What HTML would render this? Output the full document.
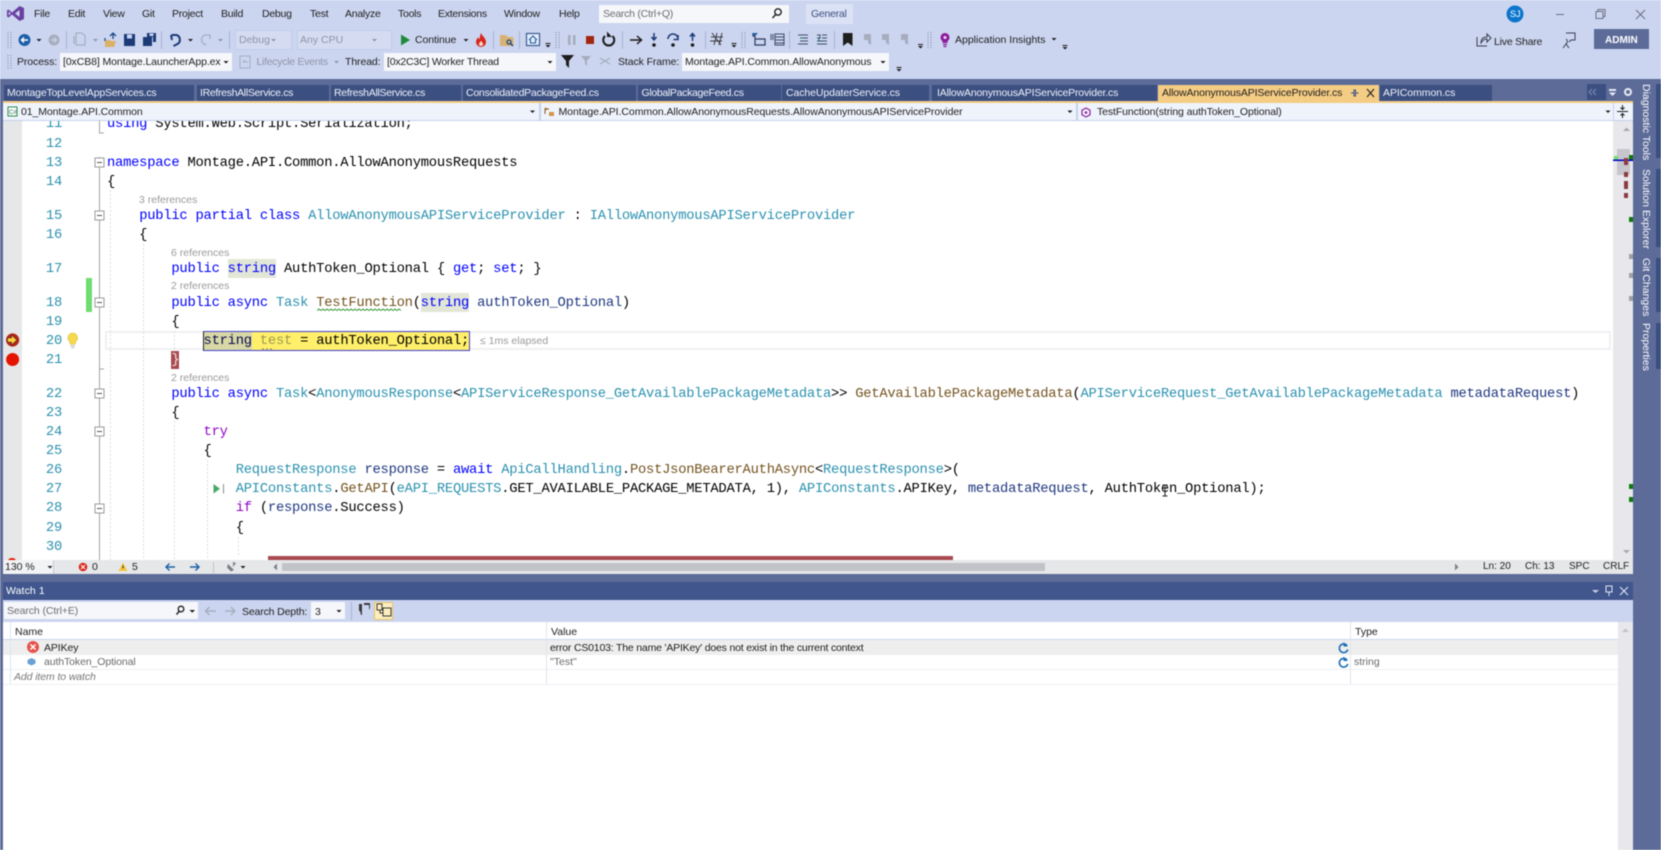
<!DOCTYPE html>
<html><head><meta charset="utf-8"><style>
html,body{margin:0;padding:0;width:1661px;height:850px;overflow:hidden;background:#fff}
#p{position:absolute;left:0;top:0;width:1661px;height:850px;overflow:hidden;background:#ccd5f0;font-family:"Liberation Sans",sans-serif;filter:blur(.45px)}
.b{position:absolute}
.t{position:absolute;white-space:pre;font-size:10.5px;line-height:14px;height:14px;color:#1e1e1e}
.m{letter-spacing:-.25px}
.tab{position:absolute;top:85px;height:16px;background:#3b4f81}
.tt{color:#f0f2fa;top:86px;letter-spacing:-.2px}
.c{position:absolute;left:107px;margin-top:1px;white-space:pre;font-family:"Liberation Mono",monospace;font-size:13.8px;letter-spacing:-.235px;line-height:19px;height:19px;color:#000}
.n{position:absolute;left:36px;margin-top:1px;width:26px;text-align:right;font-family:"Liberation Mono",monospace;font-size:13.8px;letter-spacing:-.235px;line-height:19px;color:#2b91af}
.k{color:#0000ff}.y{color:#2b91af}.f{color:#74531f}.x{color:#8f08c4}.v{color:#1f377f}
.l{position:absolute;white-space:pre;font-size:10.5px;line-height:14px;color:#9a9a9a}
.s{position:absolute;writing-mode:vertical-rl;white-space:pre;font-size:10.5px;line-height:12px;color:#fff;left:1640px}
.d{position:absolute;left:1656px;width:5px;background:#3b4f81}
</style></head><body><div id="p">

<!-- menu row -->
<div class="t m" style="left:34px;top:7px">File</div>
<div class="t m" style="left:68px;top:7px">Edit</div>
<div class="t m" style="left:103px;top:7px">View</div>
<div class="t m" style="left:142px;top:7px">Git</div>
<div class="t m" style="left:172px;top:7px">Project</div>
<div class="t m" style="left:221px;top:7px">Build</div>
<div class="t m" style="left:262px;top:7px">Debug</div>
<div class="t m" style="left:310px;top:7px">Test</div>
<div class="t m" style="left:345px;top:7px">Analyze</div>
<div class="t m" style="left:398px;top:7px">Tools</div>
<div class="t m" style="left:438px;top:7px">Extensions</div>
<div class="t m" style="left:504px;top:7px">Window</div>
<div class="t m" style="left:559px;top:7px">Help</div>
<div class="b" style="left:599px;top:5px;width:190px;height:18px;background:#f6f7fb"></div>
<div class="t m" style="left:603px;top:7px;color:#6d6d6d">Search (Ctrl+Q)</div>
<div class="b" style="left:806px;top:4px;width:47px;height:20px;background:#dce2f5"></div>
<div class="t m" style="left:811px;top:7px;color:#3b4f81">General</div>

<!-- toolbar row 2 -->
<div class="b" style="left:235px;top:30px;width:57px;height:20px;background:#d5dcf2;border:1px solid #c2cce8;box-sizing:border-box"></div>
<div class="t" style="left:239px;top:33px;color:#8e95a8">Debug</div>
<div class="b" style="left:297px;top:30px;width:95px;height:20px;background:#d5dcf2;border:1px solid #c2cce8;box-sizing:border-box"></div>
<div class="t" style="left:300px;top:33px;color:#8e95a8">Any CPU</div>
<div class="t" style="left:415px;top:33px;letter-spacing:-.1px">Continue</div>
<div class="t" style="left:955px;top:33px">Application Insights</div>
<div class="t" style="left:1494px;top:35px;letter-spacing:-.2px">Live Share</div>
<div class="b" style="left:1594px;top:29px;width:55px;height:20px;background:#5d6b99"></div>
<div class="t" style="left:1605px;top:34px;color:#fff;font-weight:bold;font-size:10px">ADMIN</div>

<!-- toolbar row 3 -->
<div class="t" style="left:17px;top:55px;letter-spacing:-.1px">Process:</div>
<div class="b" style="left:60px;top:53px;width:172px;height:18px;background:#f6f7fb"></div>
<div class="t" style="left:63px;top:55px;letter-spacing:-.1px">[0xCB8] Montage.LauncherApp.ex</div>
<div class="t" style="left:256.500px;top:55px;color:#8e95a8;letter-spacing:-.28px">Lifecycle Events</div>
<div class="t" style="left:345px;top:55px;letter-spacing:-.1px">Thread:</div>
<div class="b" style="left:384px;top:53px;width:172px;height:18px;background:#f6f7fb"></div>
<div class="t" style="left:387px;top:55px;letter-spacing:-.2px">[0x2C3C] Worker Thread</div>
<div class="t" style="left:618px;top:55px;letter-spacing:-.1px">Stack Frame:</div>
<div class="b" style="left:682px;top:53px;width:207px;height:18px;background:#f6f7fb"></div>
<div class="t" style="left:685px;top:55px;letter-spacing:-.1px">Montage.API.Common.AllowAnonymous</div>

<!-- tab strip -->
<div class="b" style="left:0;top:79px;width:1661px;height:23px;background:#5d6b99"></div>
<div class="tab" style="left:4px;width:190px"></div><div class="t tt" style="left:7px">MontageTopLevelAppServices.cs</div>
<div class="tab" style="left:197px;width:132px"></div><div class="t tt" style="left:200px;letter-spacing:-.32px">IRefreshAllService.cs</div>
<div class="tab" style="left:331px;width:130px"></div><div class="t tt" style="left:334px;letter-spacing:-.29px">RefreshAllService.cs</div>
<div class="tab" style="left:463px;width:173px"></div><div class="t tt" style="left:466px;letter-spacing:-.26px">ConsolidatedPackageFeed.cs</div>
<div class="tab" style="left:638px;width:143px"></div><div class="t tt" style="left:641.500px;letter-spacing:-.32px">GlobalPackageFeed.cs</div>
<div class="tab" style="left:782px;width:147px"></div><div class="t tt" style="left:786px;letter-spacing:-.1px">CacheUpdaterService.cs</div>
<div class="tab" style="left:932px;width:225px"></div><div class="t tt" style="left:937px;letter-spacing:-.17px">IAllowAnonymousAPIServiceProvider.cs</div>
<div class="tab" style="left:1158px;width:221px;background:#f5cc84"></div><div class="t tt" style="left:1162px;color:#1e1e1e;letter-spacing:-.12px">AllowAnonymousAPIServiceProvider.cs</div>
<div class="tab" style="left:1380px;width:112px"></div><div class="t tt" style="left:1383px;letter-spacing:-.05px">APICommon.cs</div>
<div class="b" style="left:1587px;top:84px;width:19px;height:16px;background:#3b4f81"></div>
<div class="b" style="left:3px;top:101px;width:1630px;height:2px;background:#f5cc84"></div>

<!-- nav bar -->
<div class="b" style="left:3px;top:103px;width:1630px;height:18px;background:#eff3fc"></div>
<div class="b" style="left:539px;top:103px;width:2px;height:18px;background:#c5d0ec"></div>
<div class="b" style="left:1076px;top:103px;width:2px;height:18px;background:#c5d0ec"></div>
<div class="b" style="left:1613px;top:103px;width:1px;height:18px;background:#c5d0ec"></div>
<div class="b" style="left:3px;top:120px;width:1630px;height:1px;background:#c5d0ec"></div>
<div class="t" style="left:21px;top:105px;letter-spacing:-.1px">01_Montage.API.Common</div>
<div class="t" style="left:558.500px;top:105px;letter-spacing:-.06px">Montage.API.Common.AllowAnonymousRequests.AllowAnonymousAPIServiceProvider</div>
<div class="t" style="left:1097px;top:105px;letter-spacing:-.1px">TestFunction(string authToken_Optional)</div>

<!-- side strips -->
<div class="b" style="left:1633px;top:79px;width:28px;height:771px;background:#5d6b99"></div>
<div class="d" style="top:84px;height:74px"></div><div class="s" style="top:84px">Diagnostic Tools</div>
<div class="d" style="top:169px;height:78px"></div><div class="s" style="top:169px">Solution Explorer</div>
<div class="d" style="top:258px;height:54px"></div><div class="s" style="top:258px">Git Changes</div>
<div class="d" style="top:323px;height:46px"></div><div class="s" style="top:323px">Properties</div>
<div class="b" style="left:0;top:79px;width:3px;height:771px;background:#5d6b99"></div>

<!-- editor -->
<div class="b" style="left:3px;top:121px;width:1630px;height:439px;background:#fff;overflow:hidden">
 <div class="b" style="left:0;top:0;width:19px;height:439px;background:#e6e7e8"></div>
 <div class="b" style="left:1610px;top:0;width:20px;height:439px;background:#e8e8ec"></div>
</div>
<div class="b" style="left:0;top:121px;width:1613px;height:439px;overflow:hidden">
 <div class="b" style="left:0;top:-121px;width:1613px;height:850px">
  <div class="b" style="left:105px;top:331px;width:1506px;height:19px;border:2px solid #f0f0f4;box-sizing:border-box"></div>
  <div class="b" style="left:228px;top:259px;width:48px;height:19px;background:#e2e6d6"></div>
  <div class="b" style="left:421px;top:293px;width:48px;height:19px;background:#e2e6d6"></div>
  <div class="b" style="left:203px;top:331px;width:267px;height:20px;background:#ffef6a;box-sizing:border-box;border:1px solid #4040d0;border-left:1px solid #222"></div>
  <div class="b" style="left:204px;top:332px;width:48px;height:18px;background:#d7d8a6"></div>
  <div class="b" style="left:171px;top:351px;width:8px;height:18px;background:#a84a50"></div>

  <div class="n" style="top:114px">11</div><div class="c" style="top:114px"><span class="k">using</span> System.Web.Script.Serialization;</div>
  <div class="n" style="top:134px">12</div>
  <div class="n" style="top:153px">13</div><div class="c" style="top:153px"><span class="k">namespace</span> Montage.API.Common.AllowAnonymousRequests</div>
  <div class="n" style="top:172px">14</div><div class="c" style="top:172px">{</div>
  <div class="l" style="left:139px;top:193px">3 references</div>
  <div class="n" style="top:206px">15</div><div class="c" style="top:206px">    <span class="k">public partial class</span> <span class="y">AllowAnonymousAPIServiceProvider</span> : <span class="y">IAllowAnonymousAPIServiceProvider</span></div>
  <div class="n" style="top:225px">16</div><div class="c" style="top:225px">    {</div>
  <div class="l" style="left:171px;top:246px">6 references</div>
  <div class="n" style="top:259px">17</div><div class="c" style="top:259px">        <span class="k">public string</span> AuthToken_Optional { <span class="k">get</span>; <span class="k">set</span>; }</div>
  <div class="l" style="left:171px;top:279px">2 references</div>
  <div class="n" style="top:293px">18</div><div class="c" style="top:293px">        <span class="k">public async</span> <span class="y">Task</span> <span class="f">TestFunction</span>(<span class="k">string</span> <span class="v">authToken_Optional</span>)</div>
  <div class="n" style="top:312px">19</div><div class="c" style="top:312px">        {</div>
  <div class="n" style="top:331px">20</div><div class="c" style="top:331px">            <span style="color:#0a0a50">string</span> <span style="color:#9b9a4e">test</span> = authToken_Optional;</div>
  <div class="l" style="left:480px;top:334px">≤ 1ms elapsed</div>
  <div class="n" style="top:350px">21</div><div class="c" style="top:350px;color:#f4e4e4">        }</div>
  <div class="l" style="left:171px;top:371px">2 references</div>
  <div class="n" style="top:384px">22</div><div class="c" style="top:384px">        <span class="k">public async</span> <span class="y">Task</span>&lt;<span class="y">AnonymousResponse</span>&lt;<span class="y">APIServiceResponse_GetAvailablePackageMetadata</span>&gt;&gt; <span class="f">GetAvailablePackageMetadata</span>(<span class="y">APIServiceRequest_GetAvailablePackageMetadata</span> <span class="v">metadataRequest</span>)</div>
  <div class="n" style="top:403px">23</div><div class="c" style="top:403px">        {</div>
  <div class="n" style="top:422px">24</div><div class="c" style="top:422px">            <span class="x">try</span></div>
  <div class="n" style="top:441px">25</div><div class="c" style="top:441px">            {</div>
  <div class="n" style="top:460px">26</div><div class="c" style="top:460px">                <span class="y">RequestResponse</span> <span class="v">response</span> = <span class="k">await</span> <span class="y">ApiCallHandling</span>.<span class="f">PostJsonBearerAuthAsync</span>&lt;<span class="y">RequestResponse</span>&gt;(</div>
  <div class="n" style="top:479px">27</div><div class="c" style="top:479px">                <span class="y">APIConstants</span>.<span class="f">GetAPI</span>(<span class="y">eAPI_REQUESTS</span>.GET_AVAILABLE_PACKAGE_METADATA, 1), <span class="y">APIConstants</span>.APIKey, <span class="v">metadataRequest</span>, AuthToken_Optional);</div>
  <div class="n" style="top:498px">28</div><div class="c" style="top:498px">                <span class="x">if</span> (<span class="v">response</span>.Success)</div>
  <div class="n" style="top:518px">29</div><div class="c" style="top:518px">                {</div>
  <div class="n" style="top:537px">30</div>
  <div class="b" style="left:268px;top:556px;width:685px;height:4px;background:#a84a50"></div>
 </div>
</div>

<!-- editor status -->
<div class="b" style="left:3px;top:560px;width:1630px;height:14px;background:#e6e7e8"></div>
<div class="b" style="left:4px;top:560px;width:50px;height:14px;background:#f2f3f5;border-right:1px solid #c5cad8;box-sizing:border-box"></div>
<div class="b" style="left:282px;top:563px;width:763px;height:8px;background:#c2c3c9"></div>
<div class="t" style="left:5px;top:560px">130 %</div>
<div class="t" style="left:92px;top:560px">0</div>
<div class="t" style="left:132px;top:560px">5</div>
<div class="t" style="left:1483px;top:560px;font-size:10px">Ln: 20</div>
<div class="t" style="left:1525px;top:560px;font-size:10px">Ch: 13</div>
<div class="t" style="left:1569px;top:560px;font-size:10px">SPC</div>
<div class="t" style="left:1603px;top:560px;font-size:10px">CRLF</div>
<div class="b" style="left:3px;top:574px;width:1630px;height:8px;background:#5d6b99"></div>

<!-- watch -->
<div class="b" style="left:3px;top:582px;width:1630px;height:18px;background:#40568d"></div>
<div class="t" style="left:6px;top:584px;color:#fff;letter-spacing:.1px">Watch 1</div>
<div class="b" style="left:3px;top:600px;width:1630px;height:22px;background:#ccd5f0"></div>
<div class="b" style="left:4px;top:602px;width:194px;height:17px;background:#f6f7fb"></div>
<div class="t" style="left:7px;top:604px;color:#6d6d6d;letter-spacing:-.1px">Search (Ctrl+E)</div>
<div class="t" style="left:242px;top:605px;letter-spacing:-.15px">Search Depth:</div>
<div class="b" style="left:311px;top:602px;width:34px;height:17px;background:#f6f7fb"></div>
<div class="t" style="left:315px;top:605px">3</div>
<div class="b" style="left:374px;top:602px;width:19px;height:18px;background:#fdeec0;box-sizing:border-box;border:1px solid #e5c365"></div>
<div class="b" style="left:3px;top:622px;width:1630px;height:228px;background:#fff"></div>
<div class="b" style="left:1618px;top:622px;width:15px;height:228px;background:#e8e8ec"></div>
<div class="b" style="left:3px;top:639px;width:1615px;height:1px;background:#ccd5f0"></div>
<div class="b" style="left:3px;top:640px;width:1615px;height:15px;background:#eee"></div>
<div class="b" style="left:3px;top:669px;width:1615px;height:1px;background:#eef0f5"></div>
<div class="b" style="left:3px;top:684px;width:1615px;height:1px;background:#eef0f5"></div>
<div class="b" style="left:10px;top:622px;width:1px;height:62px;background:#dfe3ef"></div>
<div class="b" style="left:546px;top:622px;width:1px;height:62px;background:#dfe3ef"></div>
<div class="b" style="left:1350px;top:622px;width:1px;height:62px;background:#dfe3ef"></div>
<div class="t" style="left:15px;top:625px">Name</div>
<div class="t" style="left:551px;top:625px">Value</div>
<div class="t" style="left:1355px;top:625px">Type</div>
<div class="t" style="left:44px;top:641px;letter-spacing:-.1px">APIKey</div>
<div class="t" style="left:550px;top:641px;letter-spacing:-.19px">error CS0103: The name 'APIKey' does not exist in the current context</div>
<div class="t" style="left:44px;top:655px;color:#6a6a6a;letter-spacing:-.1px">authToken_Optional</div>
<div class="t" style="left:550px;top:655px;color:#6a6a6a">"Test"</div>
<div class="t" style="left:1354px;top:655px;color:#6a6a6a">string</div>
<div class="t" style="left:14px;top:670px;color:#777;font-style:italic;letter-spacing:-.1px">Add item to watch</div>

<!-- icons overlay -->
<svg class="b" style="left:0;top:0" width="1661" height="850" viewBox="0 0 1661 850">
 <!-- logo -->
 <path fill-rule="evenodd" fill="#6a3fa0" d="M19.5 6L24 8V19L19.5 21L12 14.5L8.5 17.5L7 16.5V10.5L8.5 9.5L12 12.5ZM19.5 10L15 13.5L19.5 17ZM8.7 11.5V15.5L10.8 13.5Z"/>
 <!-- search -->
 <g fill="none" stroke="#1e1e1e" stroke-width="1.4"><circle cx="778" cy="12" r="3.2"/><path d="M775.7 14.5L772.5 18"/></g>
 <!-- window -->
 <circle cx="1515" cy="14" r="8.5" fill="#0b76cc"/>
 <g fill="none" stroke="#6a7080" stroke-width="1"><path d="M1556 14.5H1564"/><rect x="1596" y="11.5" width="7" height="7"/><path d="M1598 11.5V9.5H1605V16.5H1603"/><path d="M1636 10L1645 19M1645 10L1636 19"/></g>
 <!-- grips -->
 <g fill="none" stroke="#7d86a2" stroke-width="1" stroke-dasharray="1 1.5"><path d="M8 32V48M11 32V48M8 55V70M11 55V70M556 32V48M559 32V48M742 32V48M745 32V48M928 32V48M931 32V48"/></g>
 <!-- separators -->
 <g stroke="#a9b4d2" stroke-width="1"><path d="M66.5 31V49M161.5 31V49M229.5 31V49M493.5 31V49M519.5 31V49M622.5 31V49M705.5 31V49M789.5 31V49M834.5 31V49"/></g>
 <!-- carets -->
 <g fill="#1e1e1e"><path d="M36.5 39h5l-2.5 2.5zM188 39h5l-2.5 2.5zM463.5 39h5l-2.5 2.5zM1051.5 38h5l-2.5 2.5zM223.5 61h5l-2.5 2.5zM547.5 61h5l-2.5 2.5zM880.5 61h5l-2.5 2.5zM530 110.5h5l-2.5 2.5zM1067.5 110.5h5l-2.5 2.5zM1605.5 110.5h5l-2.5 2.5zM47.5 566h5l-2.5 2.5zM240.5 566h5l-2.5 2.5zM190 610h5l-2.5 2.5zM336.5 610h5l-2.5 2.5z"/>
 <path d="M545.5 45h5l-2.5 2.5zM731.5 45h5l-2.5 2.5zM918 46h5l-2.5 2.5zM1062.5 47h5l-2.5 2.5zM896.5 69h5l-2.5 2.5z"/>
 <path d="M545.5 43h5v1h-5zM731.5 43h5v1h-5zM918 44h5v1h-5zM1062.5 45h5v1h-5zM896.5 67h5v1h-5z"/></g>
 <g fill="#8e95a8"><path d="M93 39h5l-2.5 2.5zM218 39h5l-2.5 2.5zM271 39h5l-2.5 2.5zM372 39h5l-2.5 2.5zM334 61h5l-2.5 2.5z"/></g>
 <!-- nav back/forward -->
 <circle cx="24.5" cy="40" r="6" fill="#1c5fa8"/><path d="M28 40H22M24 37.5L21.5 40L24 42.5" fill="none" stroke="#fff" stroke-width="1.4"/>
 <circle cx="54" cy="40" r="5.5" fill="#a6adbf"/><path d="M51 40H56M54 37.5L56.5 40L54 42.5" fill="none" stroke="#ccd5f0" stroke-width="1.2"/>
 <!-- new item -->
 <path d="M76 33h6l3 3v9h-9zM74 36v8" fill="none" stroke="#a6adbf" stroke-width="1.2"/>
 <!-- open -->
 <path d="M105 40h5l1 1h5l-2 6h-9z" fill="#dcb067"/><path d="M105 38v3M110 36l3-3 3 3M113 33v6" fill="none" stroke="#1c4a88" stroke-width="1.3"/>
 <!-- save -->
 <path d="M124 34h11v12h-11z" fill="#1c3a78"/><rect x="127" y="34.5" width="5" height="4" fill="#ccd5f0"/>
 <path d="M143 37h9v9h-9z" fill="#1c3a78"/><path d="M147 33h9v9h-3v-5h-6z" fill="#1c3a78"/><rect x="149.5" y="33.5" width="4" height="2.5" fill="#ccd5f0"/>
 <!-- undo/redo -->
 <path d="M171 35l1 5M171.5 35h5a5 5 0 0 1 1 9l-4 2" fill="none" stroke="#1c3a78" stroke-width="2"/>
 <path d="M210 35v4M210 35h-5a5 5 0 0 0-1 9l2 1" fill="none" stroke="#a6adbf" stroke-width="1.3"/>
 <!-- continue -->
 <path d="M401 34.5L410 40L401 45.5Z" fill="#1f8a3c"/>
 <!-- flame -->
 <path d="M481 33c1 3 5 5 5 9a5 5 0 0 1-10 0c0-2 1-3 2-5 0 1 1 2 1.500 2 .5-2 .5-4 1.500-6z" fill="#d8271c"/>
 <path d="M481 41c1 1 2 2 2 3a2 2 0 0 1-4 0c0-1 1-2 2-3z" fill="#f3d8c8"/>
 <!-- folder search -->
 <path d="M500 35h6l1.500 2h6v9h-13.500z" fill="#d8b272"/><circle cx="509" cy="42" r="2" fill="none" stroke="#1c4a88" stroke-width="1.3"/><path d="M510.500 43.500l2.500 2.500" stroke="#1c4a88" stroke-width="1.4"/>
 <!-- box -->
 <rect x="526.500" y="33.500" width="13" height="12" fill="#e7edf9" stroke="#3a5a90" stroke-width="1.200"/><path d="M529 40l4-4 4 4M530.500 39.500V43h5v-3.500" fill="none" stroke="#1c5fa8" stroke-width="1.100"/>
 <!-- pause stop restart -->
 <path d="M568 35h2.500v10H568zM573 35h2.500v10H573z" fill="#a6adbf"/>
 <rect x="586" y="36" width="8" height="8" fill="#a1260d"/>
 <path d="M605 36a5.500 5.500 0 1 0 7.500 0" fill="none" stroke="#1e1e1e" stroke-width="2"/><path d="M607 31.500v5.500h5z" fill="#1e1e1e"/>
 <!-- step -->
 <path d="M630 40H641M637 36L641.500 40L637 44" fill="none" stroke="#1e1e1e" stroke-width="1.500"/>
 <path d="M654 33v6M651.500 37l2.500 3 2.500-3" fill="none" stroke="#1c3a78" stroke-width="1.500"/><circle cx="654" cy="45" r="1.800" fill="#1e1e1e"/>
 <path d="M668 39a5 5 0 0 1 10 0M678 35v4.500h-4.500" fill="none" stroke="#1c3a78" stroke-width="1.500"/><circle cx="673" cy="45" r="1.800" fill="#1e1e1e"/>
 <path d="M692.500 41v-7M690 36.500l2.500-3 2.500 3" fill="none" stroke="#1c3a78" stroke-width="1.500"/><circle cx="692.500" cy="45" r="1.800" fill="#1e1e1e"/>
 <!-- hash -->
 <path d="M714 45l3-12M719 45l3-12M711 37h12M710 41h12M712 33l9 12" fill="none" stroke="#3c3c3c" stroke-width="1"/>
 <!-- thread icons -->
 <path d="M753 33v3h2v9h10v-6h-10" fill="none" stroke="#2a3a60" stroke-width="1.200"/><path d="M752 33l3 3 3-3z" fill="#1c5fa8"/>
 <g fill="none" stroke="#3c4a68" stroke-width="1"><path d="M771 34v6M773 34v6M775 34h9v11h-9zM775 37h9M775 40h9M775 43h9"/><path d="M798 35h10M800 38h8M800 41h8M798 44h10"/><path d="M817 35h3v3h-3M822 35h5M822 38h5M817 41h10M817 44h10"/></g>
 <path d="M800 38h3M819 38v3" stroke="#1c7a4a"/>
 <!-- bookmarks -->
 <path d="M843 33h9.500v13l-4.750-3.500L843 46z" fill="#1e1e1e"/>
 <g fill="#a6adbf"><path d="M864 34h7v11l-3-2v-3h-4zM882 34h7v11l-3-2v-3h-4zM901 34h7v11l-3-2v-3h-4z"/></g>
 <!-- insights bulb -->
 <path d="M945 33a4.500 4.500 0 0 1 2.500 8.200V43h-5v-1.800A4.500 4.500 0 0 1 945 33z" fill="#8c1f9c"/><circle cx="945" cy="37.500" r="1.500" fill="#f0d8f4"/><path d="M943 44.500h4M943.500 46.500h3" stroke="#8c1f9c" stroke-width="1.200"/>
 <!-- live share / feedback -->
 <path d="M1477 37v9h10M1481 43c0-4 2-6 6-6v-3l4 4-4 4v-3c-3 0-4 1-6 4z" fill="none" stroke="#3a3f50" stroke-width="1"/>
 <path d="M1566 33h9v7h-4l-2 2M1566 39a3 3 0 0 1 0 5l-3 4M1566 44l3 4" fill="none" stroke="#3a3f50" stroke-width="1"/>
 <!-- row 3 -->
 <path d="M561 55h13l-5 6v7l-3-3v-4z" fill="#1e1e1e"/>
 <path d="M581 56h10l-4 5v5l-2-2v-3z" fill="#a6adbf"/>
 <path d="M600 58l5 3 5-3M600 64l5-3 5 3" fill="none" stroke="#a6adbf" stroke-width="1.300"/>
 <rect x="240" y="56" width="10" height="12" fill="none" stroke="#a6adbf" stroke-width="1"/><path d="M243 62h5M243 62l2-2" stroke="#a6adbf" fill="none"/>
 <!-- tab icons -->
 <path d="M1351 93h3M1354 90v6h1.500v-6zM1355.500 93h3" fill="none" stroke="#3b4f81" stroke-width="1"/>
 <path d="M1367 89l7 8M1374 89l-7 8" stroke="#2a2a2a" stroke-width="1.200"/>
 <path d="M1592 89l-3 3 3 3M1596 89l-3 3 3 3" fill="none" stroke="#7d8cb8" stroke-width="1.100"/>
 <path d="M1609 89h7v2h-7zM1609 92.500h7l-3.500 3.500z" fill="#e8ebf4"/>
 <circle cx="1628" cy="92" r="3" fill="none" stroke="#e8ebf4" stroke-width="2"/>
 <!-- nav icons -->
 <rect x="8" y="107" width="9" height="9" fill="#fff" stroke="#2a8a4a"/><text x="9" y="114" font-size="6" font-family="Liberation Sans,sans-serif" fill="#2a6a4a">C#</text>
 <path d="M545 107l3 2-3 2zM549 112h5v4h-5z" fill="#d0954a"/>
 <path d="M545 114v-5h4" fill="none" stroke="#8a5a20"/>
 <path d="M1086 108l4 2.200v4.600l-4 2.200-4-2.200v-4.600z" fill="none" stroke="#8c1f9c" stroke-width="1.200"/><circle cx="1086" cy="112.500" r="1.300" fill="#8c1f9c"/>
 <path d="M1617 111.500h11M1622.500 105v4.500M1620.500 107.500l2 2 2-2M1622.500 118v-4.500M1620.500 115.500l2-2 2 2" fill="none" stroke="#1e1e1e" stroke-width="1"/>
 <!-- margin markers -->
 <rect x="86" y="278" width="6" height="34" fill="#6fdc6f"/>
 <g stroke="#a5a5a5" stroke-width="1" fill="none"><path d="M99.500 121V133H104"/><path d="M99.500 157V560M99.500 369H104"/></g>
 <g fill="#fff" stroke="#9a9a9a" stroke-width="1">
  <rect x="95" y="158" width="9" height="9"/><rect x="95" y="211" width="9" height="9"/><rect x="95" y="298" width="9" height="9"/><rect x="95" y="389" width="9" height="9"/><rect x="95" y="427" width="9" height="9"/><rect x="95" y="504" width="9" height="9"/></g>
 <path d="M97 162.500h5M97 215.500h5M97 302.500h5M97 393.500h5M97 431.500h5M97 508.500h5" stroke="#555"/>
 <g stroke="#dcdcdc" stroke-width="1" stroke-dasharray="2 2" fill="none"><path d="M110.500 190V560M143.500 244V560M174.500 331V350M174.500 421V560M207.500 460V560M238.500 537V556"/></g>
 <!-- squiggle -->
 <path d="M317 310.500l2-1.500 2 1.500 2-1.500 2 1.500 2-1.500 2 1.500 2-1.500 2 1.500 2-1.500 2 1.500 2-1.500 2 1.500 2-1.500 2 1.500 2-1.500 2 1.500 2-1.500 2 1.500 2-1.500 2 1.500 2-1.500 2 1.500 2-1.500 2 1.500 2-1.500 2 1.500 2-1.500 2 1.500 2-1.500 2 1.500 2-1.500 2 1.500 2-1.500 2 1.500 2-1.500 2 1.500 2-1.500 2 1.500 2-1.500 2 1.500 2-1.500 2 1.500" fill="none" stroke="#3f9c3f" stroke-width="1"/>
 <path d="M262 349h2M266 349h2M270 349h2" stroke="#777" stroke-width="1"/>
 <!-- breakpoints -->
 <circle cx="12.600" cy="340" r="6.600" fill="#b8231c"/>
 <path d="M7.500 338h4v-3l5.500 5-5.500 5v-3h-4z" fill="#ffd23f" stroke="#3a2a10" stroke-width=".6"/>
 <circle cx="12.600" cy="359.500" r="6.500" fill="#e51400"/>
 <path d="M8 560a5 5 0 0 1 8 0z" fill="#e51400"/>
 <!-- bulb -->
 <path d="M72.700 333a4.800 4.800 0 0 1 2.800 8.700V344h-5.600v-2.300a4.800 4.800 0 0 1 2.800-8.700z" fill="#f4d84e" stroke="#e3c23a" stroke-width=".6"/><path d="M70.500 345.500h4.400M71 347.500h3.400" stroke="#b8b8a8" stroke-width="1"/>
 <!-- run-to-click -->
 <path d="M213.500 484v9.500l6.500-4.750z" fill="#48a868"/><path d="M223.500 484v9.500" stroke="#8a8a8a" stroke-width="1"/>
 <!-- ibeam -->
 <path d="M1162.500 485h5M1165 485v11M1162.500 496h5" stroke="#222" stroke-width="1" fill="none"/>
 <!-- scrollbar marks -->
 <path d="M1623 131l3.500-3.500 3.500 3.500z" fill="#a8a8ae"/>
 <rect x="1617" y="149" width="13" height="26" fill="#c6c6cc"/>
 <rect x="1614" y="156" width="4" height="4" fill="#6fdc6f"/>
 <rect x="1629" y="155" width="4" height="5" fill="#0e7a0e"/>
 <rect x="1613" y="159.500" width="20" height="1.500" fill="#0000c8"/>
 <g fill="#8c3a42"><rect x="1624" y="158" width="4" height="7"/><rect x="1624" y="172" width="4" height="5"/><rect x="1624" y="181" width="4" height="8"/><rect x="1624" y="193" width="4" height="5"/></g>
 <rect x="1629" y="217" width="4" height="5" fill="#0e7a0e"/>
 <g fill="#a0a0a0"><rect x="1629" y="254" width="4" height="5"/><rect x="1629" y="273" width="4" height="5"/><rect x="1629" y="296" width="4" height="5"/></g>
 <rect x="1629" y="484" width="4" height="5" fill="#0e7a0e"/><rect x="1629" y="497" width="4" height="5" fill="#0e7a0e"/>
 <path d="M1623 550l3.500 3.500 3.500-3.500z" fill="#a8a8ae"/>
 <!-- status icons -->
 <circle cx="83" cy="567" r="4.300" fill="#d8271c"/><path d="M81 565l4 4M85 565l-4 4" stroke="#fff" stroke-width="1"/>
 <path d="M123 562.500l4.500 8.500h-9z" fill="#f4c542"/><path d="M123 565.500v3" stroke="#333"/>
 <path d="M175 567h-9M169.500 563.500l-3.500 3.500 3.500 3.500" fill="none" stroke="#1c5fa8" stroke-width="1.400"/>
 <path d="M190 567h9M195.500 563.500l3.500 3.500-3.500 3.500" fill="none" stroke="#1c5fa8" stroke-width="1.400"/>
 <path d="M213.500 562v11" stroke="#c0c2c8"/>
 <path d="M228 564l6 6-3 1.500-4-4zM233 562l3 1-3 4" fill="#7a7f8a"/>
 <path d="M277 563.500v7l-3.500-3.500z" fill="#7a7f8a"/><path d="M1455 563.500v7l3.500-3.500z" fill="#7a7f8a"/>
 <!-- watch title -->
 <path d="M1592 590h7l-3.500 3z" fill="#c8d0e8"/>
 <path d="M1606 586h6v6h-6zM1606 592h6M1609 592v4" fill="none" stroke="#e0e5f3" stroke-width="1"/>
 <path d="M1620 587l8 8M1628 587l-8 8" stroke="#e0e5f3" stroke-width="1.100"/>
 <!-- watch toolbar -->
 <circle cx="181" cy="609" r="2.800" fill="none" stroke="#1e1e1e" stroke-width="1.300"/><path d="M179 611.500l-2.500 3" stroke="#1e1e1e" stroke-width="1.400"/>
 <path d="M189.500 610h5l-2.500 2.500z" fill="#1e1e1e"/>
 <path d="M216 611h-10M209.500 607l-4 4 4 4M225 611h10M231 607l4 4-4 4" fill="none" stroke="#a6adbf" stroke-width="1.400"/>
 <path d="M351.500 602v18" stroke="#a9b4d2"/>
 <path d="M359 604h3v11h-1l-1-4h-1zM364 603h6v5l-1 2v-5h-5z" fill="#3a3a3a"/>
 <rect x="377" y="604" width="5" height="6" fill="none" stroke="#3a3a3a"/><rect x="383" y="608" width="8" height="8" fill="none" stroke="#3a3a3a"/><path d="M380 610v3h3" stroke="#3a3a3a" fill="none"/>
 <!-- watch row icons -->
 <circle cx="33" cy="647" r="6" fill="#e5534b"/><path d="M30.500 644.500l5 5M35.500 644.500l-5 5" stroke="#fff" stroke-width="1.500"/>
 <path d="M31.500 658l4 2v3.500l-4 2-4-2V660z" fill="#6aa0d4"/>
 <path d="M1347 645.500a4.300 4.300 0 1 0 .8 4" fill="none" stroke="#1c6fb8" stroke-width="1.600"/><path d="M1343.500 642v4.500h4.500z" fill="#1c6fb8"/>
 <path d="M1347 660a4.300 4.300 0 1 0 .8 4" fill="none" stroke="#1c6fb8" stroke-width="1.600"/><path d="M1343.500 656.500v4.500h4.500z" fill="#1c6fb8"/>
 <path d="M1622 632l3.500-3.500 3.500 3.500z" fill="#c0c0c6"/>
</svg>
<div class="t" style="left:1510px;top:7px;color:#fff;font-size:9px">SJ</div>
</div></body></html>
